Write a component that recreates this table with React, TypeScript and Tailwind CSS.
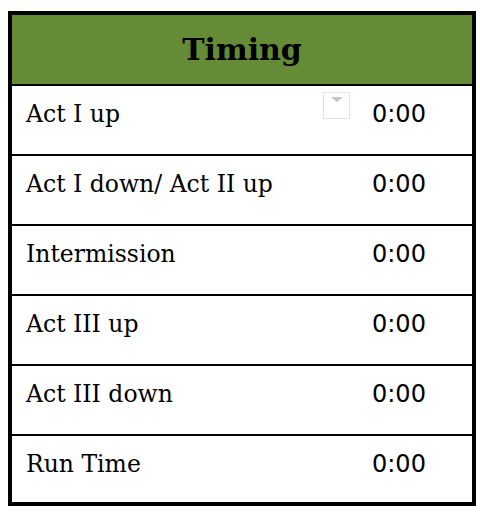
import React from "react";

const rows = [
  "Act I up",
  "Act I down/ Act II up",
  "Intermission",
  "Act III up",
  "Act III down",
  "Run Time",
];

export default function App() {
  return (
    <div className="w-[480px] h-[516px] bg-white pt-[11px] pl-[8px]">
      <div className="w-[468px] border-4 border-black flex flex-col">
        <div className="h-[71px] bg-[#658b37] border-b-2 border-black flex items-center justify-center">
          <span
            className="text-[30px] font-bold text-black leading-none"
            style={{ fontFamily: '"DejaVu Serif", serif' }}
          >
            Timing
          </span>
        </div>
        {rows.map((r, i) => (
          <div
            key={r}
            className={`relative flex items-baseline pl-[14px] pt-[14px] ${
              i < rows.length - 1 ? "h-[70px] border-b-2 border-black" : "h-[66px]"
            }`}
          >
            <span
              className="w-[346px] text-[23.5px] leading-[28px] text-black"
              style={{ fontFamily: '"DejaVu Serif", serif' }}
            >
              {r}
            </span>
            <span
              className="text-[24px] leading-[28px] text-black"
              style={{ fontFamily: '"DejaVu Sans", sans-serif' }}
            >
              0:00
            </span>
            {i === 0 && (
              <div className="absolute left-[311px] top-[6px] w-[27px] h-[27px] border border-[#e3e3e3] flex justify-center pt-[4px]">
                <div className="w-0 h-0 border-l-[6px] border-r-[6px] border-t-[5px] border-l-transparent border-r-transparent border-t-[#c4c4c4]" />
              </div>
            )}
          </div>
        ))}
      </div>
    </div>
  );
}
